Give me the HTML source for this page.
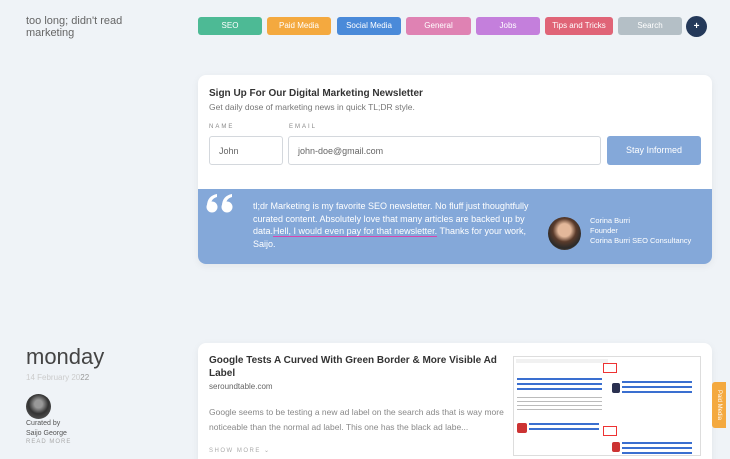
<!DOCTYPE html>
<html><head><style>
*{box-sizing:border-box;margin:0;padding:0}
html,body{width:730px;height:459px;overflow:hidden}
body{background:#eff3f7;font-family:"Liberation Sans",sans-serif;position:relative;color:#333}
.a{position:absolute}
.btn{position:absolute;top:17px;height:18px;border-radius:3px;color:#fff;font-size:8px;text-align:center;line-height:18px}
.card{position:absolute;background:#fff;border-radius:8px;box-shadow:0 2px 8px rgba(0,0,0,.06);overflow:hidden}
.inp{position:absolute;border:1px solid #d4d8dd;border-radius:3px;font-size:9px;color:#666;line-height:28px;padding-left:9px;height:29px;top:136px}
</style></head><body>
<div class="a" style="left:26px;top:15px;font-size:11px;color:#666;line-height:12px">too long; didn't read<br>marketing</div>
<div class="btn" style="left:198px;width:64px;background:#4dba95">SEO</div>
<div class="btn" style="left:267px;width:64px;background:#f4a93f">Paid Media</div>
<div class="btn" style="left:337px;width:64px;background:#4a8ad9">Social Media</div>
<div class="btn" style="left:406px;width:65px;background:#df82b3">General</div>
<div class="btn" style="left:476px;width:64px;background:#c47fdc">Jobs</div>
<div class="btn" style="left:545px;width:68px;background:#e06477">Tips and Tricks</div>
<div class="btn" style="left:618px;width:64px;background:#b4bfc6">Search</div>
<div class="a" style="left:686px;top:16px;width:21px;height:21px;border-radius:50%;background:#24395a;color:#fff;font-size:10px;text-align:center;line-height:21px;font-weight:bold">+</div>

<div class="card" style="left:198px;top:75px;width:514px;height:189px">
 <div class="a" style="left:11px;top:13px;font-size:10px;font-weight:bold;color:#333">Sign Up For Our Digital Marketing Newsletter</div>
 <div class="a" style="left:11px;top:27px;font-size:8.5px;color:#777">Get daily dose of marketing news in quick TL;DR style.</div>
 <div class="a" style="left:11px;top:49px;font-size:6px;letter-spacing:2px;color:#888">NAME</div>
 <div class="a" style="left:91px;top:49px;font-size:6px;letter-spacing:2px;color:#888">EMAIL</div>
 <div class="a" style="left:409px;top:61px;width:94px;height:29px;background:#84a8d9;border-radius:3px;color:#fff;font-size:9px;text-align:center;line-height:29px">Stay Informed</div>
 <div class="a" style="left:0;top:114px;width:514px;height:75px;background:#84a8d9;color:#fff">
  <svg class="a" style="left:8px;top:5px" width="28" height="19" viewBox="0 0 28 19"><g fill="#fff"><circle cx="6" cy="13" r="5.5"/><path d="M1 12 C1 5 5 1 11 0 L11 3 C7 4 5 7 5 10 Z"/><circle cx="21" cy="13" r="5.5"/><path d="M16 12 C16 5 20 1 26 0 L26 3 C22 4 20 7 20 10 Z"/></g></svg>
  <div class="a" style="left:55px;top:11px;width:292px;font-size:9px;line-height:12.5px">tl;dr Marketing is my favorite SEO newsletter. No fluff just thoughtfully curated content. Absolutely love that many articles are backed up by data.<span style="border-bottom:1.5px solid #d946b0">Hell, I would even pay for that newsletter.</span> Thanks for your work, Saijo.</div>
  <div class="a" style="left:350px;top:28px;width:33px;height:33px;border-radius:50%;background:radial-gradient(circle at 50% 40%,#e3b89a 25%,#5a3b2b 45%,#2a2a2a 70%,#a07555)"></div>
  <div class="a" style="left:392px;top:27px;font-size:7.5px;line-height:10px">Corina Burri<br>Founder<br>Corina Burri SEO Consultancy</div>
 </div>
</div>
<div class="inp" style="left:209px;width:74px">John</div>
<div class="inp" style="left:288px;width:313px">john-doe@gmail.com</div>

<div class="a" style="left:26px;top:344px;font-size:22px;color:#444">monday</div>
<div class="a" style="left:26px;top:373px;font-size:8px;color:#ccc">14 February 20<span style="color:#999">22</span></div>
<div class="a" style="left:26px;top:394px;width:25px;height:25px;border-radius:50%;background:radial-gradient(circle at 50% 40%,#999 20%,#333 50%,#666)"></div>
<div class="a" style="left:26px;top:419px;font-size:7px;color:#555;line-height:9.5px">Curated by<br>Saijo George</div>
<div class="a" style="left:26px;top:439px;font-size:6px;color:#aaa;letter-spacing:1px">READ MORE</div>

<div class="card" style="left:198px;top:343px;width:514px;height:130px">
 <div class="a" style="left:11px;top:12px;width:290px;font-size:10px;font-weight:bold;line-height:12.5px;color:#333">Google Tests A Curved With Green Border &amp; More Visible Ad Label</div>
 <div class="a" style="left:11px;top:39px;font-size:8px;color:#666">seroundtable.com</div>
 <div class="a" style="left:11px;top:62px;width:300px;font-size:8.5px;line-height:15px;color:#888">Google seems to be testing a new ad label on the search ads that is way more noticeable than the normal ad label. This one has the black ad labe...</div>
 <div class="a" style="left:11px;top:104px;font-size:6px;color:#aaa;letter-spacing:1.5px">SHOW MORE ⌄</div>
 <div class="a" style="left:315px;top:13px;width:188px;height:100px;border:1px solid #ddd;background:#fff">
  <div class="a" style="left:2px;top:2px;width:92px;height:4px;background:#f1f1f1"></div>
  <div class="a" style="left:3px;top:21px;width:85px;height:14px;background:repeating-linear-gradient(#3a6fd0 0 2px,#fff 2px 5px)"></div>
  <div class="a" style="left:3px;top:40px;width:85px;height:14px;background:repeating-linear-gradient(#bbb 0 1px,#fff 1px 4px)"></div>
  <div class="a" style="left:3px;top:66px;width:10px;height:10px;background:#c33;border-radius:2px"></div>
  <div class="a" style="left:15px;top:66px;width:70px;height:10px;background:repeating-linear-gradient(#3a6fd0 0 2px,#fff 2px 5px)"></div>
  <div class="a" style="left:89px;top:6px;width:14px;height:10px;border:1.5px solid #e33"></div>
  <div class="a" style="left:89px;top:69px;width:14px;height:10px;border:1.5px solid #e33"></div>
  <div class="a" style="left:98px;top:26px;width:8px;height:10px;background:#2a3050;border-radius:2px"></div>
  <div class="a" style="left:108px;top:24px;width:70px;height:14px;background:repeating-linear-gradient(#3a6fd0 0 2px,#fff 2px 5px)"></div>
  <div class="a" style="left:98px;top:85px;width:8px;height:10px;background:#c33;border-radius:2px"></div>
  <div class="a" style="left:108px;top:85px;width:70px;height:12px;background:repeating-linear-gradient(#3a6fd0 0 2px,#fff 2px 5px)"></div>
 </div>
</div>
<div class="a" style="left:712px;top:382px;width:14px;height:46px;background:#f4a93f;border-radius:3px 0 0 3px;color:#fff;font-size:6px;writing-mode:vertical-rl;text-align:center;line-height:14px">Paid Media</div>
</body></html>
